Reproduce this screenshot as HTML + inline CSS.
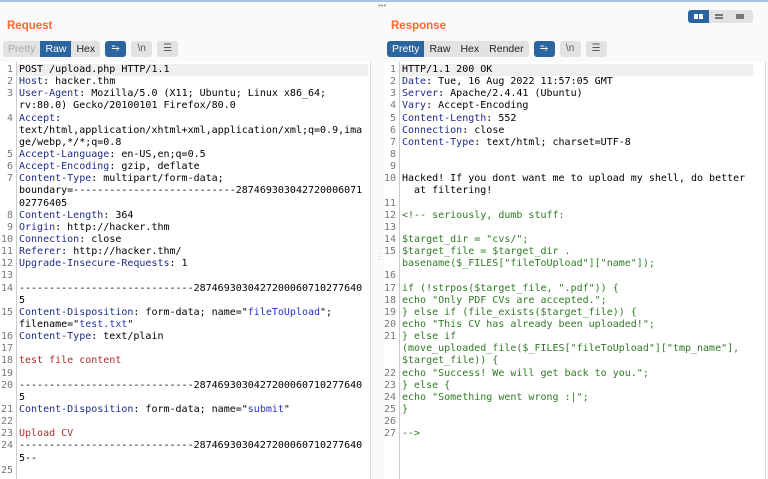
<!DOCTYPE html><html><head><meta charset="utf-8"><style>
*{margin:0;padding:0;box-sizing:border-box}
body{width:768px;height:479px;background:#fafafa;position:relative;overflow:hidden;font-family:"Liberation Sans",sans-serif}
.topline{position:absolute;left:0;top:0;width:768px;height:2px;background:#a8c4e4}
.title{position:absolute;top:19px;font-weight:bold;font-size:11.5px;color:#ff6633}
.btns{position:absolute;top:41px;height:16px;display:flex;gap:0;font-size:10.5px}
.grp{display:flex;background:#e2e2e2;border-radius:3px;overflow:hidden;height:16px;margin-right:5px}
.grp span{padding:0 5px;line-height:16px;color:#222}
.grp span.on{background:#2b65a0;color:#fff}
.grp span.dis{color:#aaa}
.ib{width:21px;height:16px;border-radius:3px;background:#e2e2e2;margin-right:5px;color:#555;text-align:center;line-height:16px;font-size:10px}
.ib.on{background:#2b65a0;color:#fff}
.ed{position:absolute;top:62px;bottom:0;background:#fff;font-family:"DejaVu Sans Mono",monospace;font-size:10px;border-right:1px solid #ddd;padding-top:2px}
.gut{position:absolute;top:0;bottom:0;width:1px;background:#ccc}
.r{height:12.15px;line-height:12.15px;white-space:pre;position:relative}
.r .n{position:absolute;left:0;width:13px;text-align:right;color:#777}
.r .t{position:absolute;left:19px}
.hl{background:#efefef}
.k{color:#1f2b8a}.v{color:#222}.red{color:#b22c2c}.s{color:#2430c0}.g{color:#2f7a24}
</style></head><body>
<div class="topline"></div>
<div style="position:absolute;left:378px;top:1px;font-size:8px;color:#999;letter-spacing:0">•••</div>
<div class="title" style="left:7px;top:20px">Request</div>
<div class="title" style="left:391px;top:20px">Response</div>
<div style="position:absolute;left:688px;top:10px;width:65px;height:13px;background:#e2e2e2;border-radius:3px;overflow:hidden">
<div style="position:absolute;left:0;top:0;width:21px;height:13px;background:#2b65a0"></div>
<div style="position:absolute;left:6px;top:4px;width:4px;height:5px;background:#fff"></div><div style="position:absolute;left:11px;top:4px;width:4px;height:5px;background:#fff"></div>
<div style="position:absolute;left:27px;top:4px;width:8px;height:2px;background:#777"></div><div style="position:absolute;left:27px;top:7px;width:8px;height:2px;background:#777"></div>
<div style="position:absolute;left:48px;top:4px;width:8px;height:5px;background:#777"></div>
</div>
<div class="btns" style="left:3px"><div class="grp"><span class="dis">Pretty</span><span class="on">Raw</span><span>Hex</span></div><div class="ib on">⥱</div><div class="ib">\n</div><div class="ib">☰</div></div>
<div class="btns" style="left:387px"><div class="grp"><span class="on">Pretty</span><span>Raw</span><span>Hex</span><span>Render</span></div><div class="ib on">⥱</div><div class="ib">\n</div><div class="ib">☰</div></div>

<div class="ed" style="left:0;width:371px">
<div class="gut" style="left:16px"></div>
<div class="r hl" style="margin-left:17px;margin-right:2px"><span class="t" style="left:2px">POST /upload.php HTTP/1.1</span><span class="n" style="left:-17px">1</span></div>
<div class="r"><span class="n">2</span><span class="t"><span class="k">Host</span>: hacker.thm</span></div>
<div class="r"><span class="n">3</span><span class="t"><span class="k">User-Agent</span>: Mozilla/5.0 (X11; Ubuntu; Linux x86_64;</span></div>
<div class="r"><span class="t">rv:80.0) Gecko/20100101 Firefox/80.0</span></div>
<div class="r"><span class="n">4</span><span class="t"><span class="k">Accept</span>:</span></div>
<div class="r"><span class="t">text/html,application/xhtml+xml,application/xml;q=0.9,ima</span></div>
<div class="r"><span class="t">ge/webp,*/*;q=0.8</span></div>
<div class="r"><span class="n">5</span><span class="t"><span class="k">Accept-Language</span>: en-US,en;q=0.5</span></div>
<div class="r"><span class="n">6</span><span class="t"><span class="k">Accept-Encoding</span>: gzip, deflate</span></div>
<div class="r"><span class="n">7</span><span class="t"><span class="k">Content-Type</span>: multipart/form-data;</span></div>
<div class="r"><span class="t">boundary=---------------------------287469303042720006071</span></div>
<div class="r"><span class="t">02776405</span></div>
<div class="r"><span class="n">8</span><span class="t"><span class="k">Content-Length</span>: 364</span></div>
<div class="r"><span class="n">9</span><span class="t"><span class="k">Origin</span>: http://hacker.thm</span></div>
<div class="r"><span class="n">10</span><span class="t"><span class="k">Connection</span>: close</span></div>
<div class="r"><span class="n">11</span><span class="t"><span class="k">Referer</span>: http://hacker.thm/</span></div>
<div class="r"><span class="n">12</span><span class="t"><span class="k">Upgrade-Insecure-Requests</span>: 1</span></div>
<div class="r"><span class="n">13</span></div>
<div class="r"><span class="n">14</span><span class="t">-----------------------------2874693030427200060710277640</span></div>
<div class="r"><span class="t">5</span></div>
<div class="r"><span class="n">15</span><span class="t"><span class="k">Content-Disposition</span>: form-data; name="<span class="s">fileToUpload</span>";</span></div>
<div class="r"><span class="t">filename="<span class="s">test.txt</span>"</span></div>
<div class="r"><span class="n">16</span><span class="t"><span class="k">Content-Type</span>: text/plain</span></div>
<div class="r"><span class="n">17</span></div>
<div class="r"><span class="n">18</span><span class="t red">test file content</span></div>
<div class="r"><span class="n">19</span></div>
<div class="r"><span class="n">20</span><span class="t">-----------------------------2874693030427200060710277640</span></div>
<div class="r"><span class="t">5</span></div>
<div class="r"><span class="n">21</span><span class="t"><span class="k">Content-Disposition</span>: form-data; name="<span class="s">submit</span>"</span></div>
<div class="r"><span class="n">22</span></div>
<div class="r"><span class="n">23</span><span class="t red">Upload CV</span></div>
<div class="r"><span class="n">24</span><span class="t">-----------------------------2874693030427200060710277640</span></div>
<div class="r"><span class="t">5--</span></div>
<div class="r"><span class="n">25</span></div>
</div>
<div style="position:absolute;left:378px;top:252px;font-size:8px;color:#aaa;line-height:3px;width:3px">·<br>·<br>·</div>
<div style="position:absolute;left:759px;top:252px;font-size:8px;color:#aaa;line-height:3px;width:3px">·<br>·<br>·</div>

<div class="ed" style="left:384px;width:382px">
<div class="gut" style="left:15px"></div>
<style>.ed2 .r .t{left:18px}.ed2 .r .n{width:12px}</style>
<div class="ed2">
<div class="r hl" style="margin-left:16px;margin-right:12px"><span class="t" style="left:2px">HTTP/1.1 200 OK</span><span class="n" style="left:-16px">1</span></div>
<div class="r"><span class="n">2</span><span class="t"><span class="k">Date</span>: Tue, 16 Aug 2022 11:57:05 GMT</span></div>
<div class="r"><span class="n">3</span><span class="t"><span class="k">Server</span>: Apache/2.4.41 (Ubuntu)</span></div>
<div class="r"><span class="n">4</span><span class="t"><span class="k">Vary</span>: Accept-Encoding</span></div>
<div class="r"><span class="n">5</span><span class="t"><span class="k">Content-Length</span>: 552</span></div>
<div class="r"><span class="n">6</span><span class="t"><span class="k">Connection</span>: close</span></div>
<div class="r"><span class="n">7</span><span class="t"><span class="k">Content-Type</span>: text/html; charset=UTF-8</span></div>
<div class="r"><span class="n">8</span></div>
<div class="r"><span class="n">9</span></div>
<div class="r"><span class="n">10</span><span class="t">Hacked! If you dont want me to upload my shell, do better</span></div>
<div class="r"><span class="t">  at filtering!</span></div>
<div class="r"><span class="n">11</span></div>
<div class="r"><span class="n">12</span><span class="t g">&lt;!-- seriously, dumb stuff:</span></div>
<div class="r"><span class="n">13</span></div>
<div class="r"><span class="n">14</span><span class="t g">$target_dir = "cvs/";</span></div>
<div class="r"><span class="n">15</span><span class="t g">$target_file = $target_dir .</span></div>
<div class="r"><span class="t g">basename($_FILES["fileToUpload"]["name"]);</span></div>
<div class="r"><span class="n">16</span></div>
<div class="r"><span class="n">17</span><span class="t g">if (!strpos($target_file, ".pdf")) {</span></div>
<div class="r"><span class="n">18</span><span class="t g">echo "Only PDF CVs are accepted.";</span></div>
<div class="r"><span class="n">19</span><span class="t g">} else if (file_exists($target_file)) {</span></div>
<div class="r"><span class="n">20</span><span class="t g">echo "This CV has already been uploaded!";</span></div>
<div class="r"><span class="n">21</span><span class="t g">} else if</span></div>
<div class="r"><span class="t g">(move_uploaded_file($_FILES["fileToUpload"]["tmp_name"],</span></div>
<div class="r"><span class="t g">$target_file)) {</span></div>
<div class="r"><span class="n">22</span><span class="t g">echo "Success! We will get back to you.";</span></div>
<div class="r"><span class="n">23</span><span class="t g">} else {</span></div>
<div class="r"><span class="n">24</span><span class="t g">echo "Something went wrong :|";</span></div>
<div class="r"><span class="n">25</span><span class="t g">}</span></div>
<div class="r"><span class="n">26</span></div>
<div class="r"><span class="n">27</span><span class="t g">--&gt;</span></div>
</div>
</div>
</body></html>
